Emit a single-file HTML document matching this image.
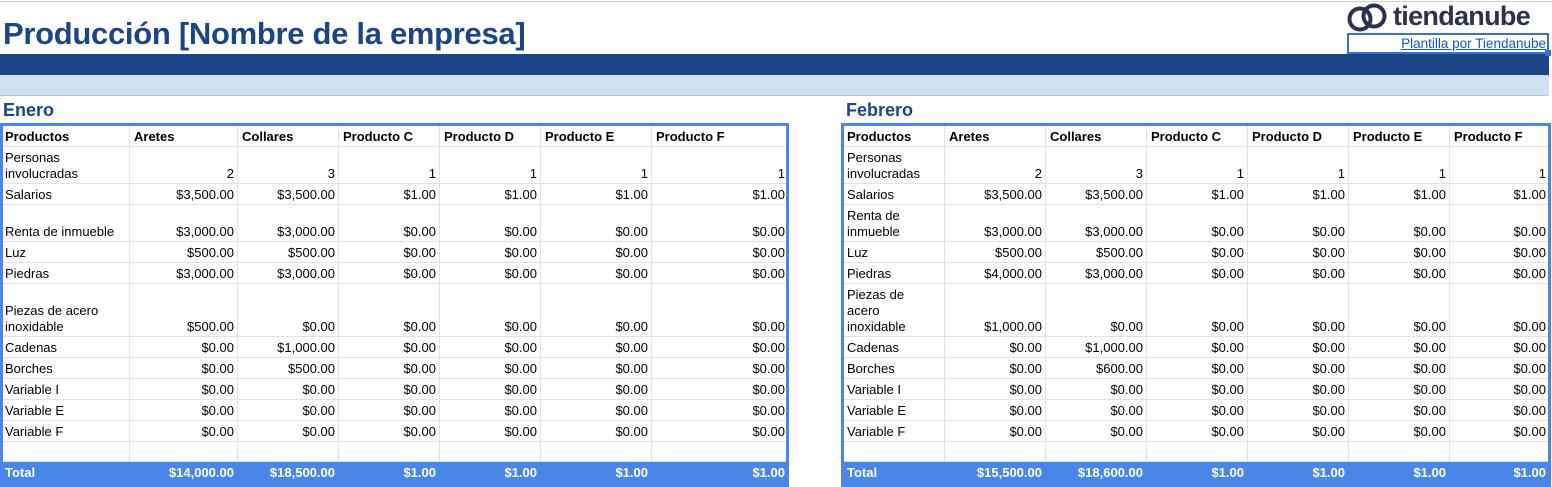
<!DOCTYPE html>
<html><head><meta charset="utf-8"><style>
*{box-sizing:border-box;margin:0;padding:0}
body{width:1552px;height:487px;background:#fff;font-family:"Liberation Sans",Arial,sans-serif;position:relative;overflow:hidden;color:#000}
.abs{position:absolute}
table{border-collapse:collapse;table-layout:fixed;position:absolute;font-size:13px}
td{border:1px solid #e2e2e2;padding:0 3px 1px 4px;vertical-align:bottom;line-height:16px;white-space:nowrap;overflow:hidden}
td.n{text-align:right}
tr.h td{font-weight:bold}
tr.t td{background:#4a86e8;color:#fff;font-weight:bold;border-color:#4a86e8;vertical-align:middle}
.frame{position:absolute;border:3px solid #4a86e8;pointer-events:none}
</style></head><body>
<div class="abs" style="left:0;top:1px;width:1552px;height:1px;background:#d0d0d0"></div>
<div class="abs" style="left:3px;top:16px;font-size:31px;font-weight:bold;color:#1c4587;letter-spacing:-0.3px">Producción [Nombre de la empresa]</div>
<div class="abs" style="left:0;top:54px;width:1549px;height:21px;background:#1c4587"></div>
<div class="abs" style="left:0;top:75px;width:1549px;height:21px;background:#cfe2f3;border-bottom:1px solid #c0c8d0"></div>
<div class="abs" style="left:3px;top:100px;font-size:18px;font-weight:bold;color:#1c4587">Enero</div>
<div class="abs" style="left:846px;top:100px;font-size:18px;font-weight:bold;color:#1c4587">Febrero</div>
<svg class="abs" style="left:1347px;top:2px" width="44" height="32" viewBox="0 0 44 32"><circle cx="13" cy="17" r="10.5" fill="none" stroke="#2d3150" stroke-width="4"/><circle cx="27" cy="14" r="10.5" fill="none" stroke="#2d3150" stroke-width="4"/></svg>
<div class="abs" style="left:1393px;top:1px;font-size:27px;font-weight:bold;color:#2d3150;letter-spacing:-0.7px">tiendanube</div>
<div class="abs" style="left:1347px;top:33px;width:202px;height:21px;border:2px solid #3a6ed8;font-size:13.5px;text-align:right;padding:1px 1px 0 0;white-space:nowrap"><span style="color:#1155cc;text-decoration:underline">Plantilla por Tiendanube</span></div>
<div class="abs" style="left:1545px;top:50px;width:6px;height:6px;background:#3a6ed8"></div>

<table style="left:0;top:124px;width:788px">
<colgroup><col style="width:129px"><col style="width:108px"><col style="width:101px"><col style="width:101px"><col style="width:101px"><col style="width:111px"><col style="width:137px"></colgroup>
<tr class="h" style="height:22px"><td>Productos</td><td>Aretes</td><td>Collares</td><td>Producto C</td><td>Producto D</td><td>Producto E</td><td>Producto F</td></tr>
<tr style="height:37px"><td>Personas<br>involucradas</td><td class="n">2</td><td class="n">3</td><td class="n">1</td><td class="n">1</td><td class="n">1</td><td class="n">1</td></tr>
<tr style="height:21px"><td>Salarios</td><td class="n">$3,500.00</td><td class="n">$3,500.00</td><td class="n">$1.00</td><td class="n">$1.00</td><td class="n">$1.00</td><td class="n">$1.00</td></tr>
<tr style="height:37px"><td>Renta de inmueble</td><td class="n">$3,000.00</td><td class="n">$3,000.00</td><td class="n">$0.00</td><td class="n">$0.00</td><td class="n">$0.00</td><td class="n">$0.00</td></tr>
<tr style="height:21px"><td>Luz</td><td class="n">$500.00</td><td class="n">$500.00</td><td class="n">$0.00</td><td class="n">$0.00</td><td class="n">$0.00</td><td class="n">$0.00</td></tr>
<tr style="height:21px"><td>Piedras</td><td class="n">$3,000.00</td><td class="n">$3,000.00</td><td class="n">$0.00</td><td class="n">$0.00</td><td class="n">$0.00</td><td class="n">$0.00</td></tr>
<tr style="height:53px"><td>Piezas de acero<br>inoxidable</td><td class="n">$500.00</td><td class="n">$0.00</td><td class="n">$0.00</td><td class="n">$0.00</td><td class="n">$0.00</td><td class="n">$0.00</td></tr>
<tr style="height:21px"><td>Cadenas</td><td class="n">$0.00</td><td class="n">$1,000.00</td><td class="n">$0.00</td><td class="n">$0.00</td><td class="n">$0.00</td><td class="n">$0.00</td></tr>
<tr style="height:21px"><td>Borches</td><td class="n">$0.00</td><td class="n">$500.00</td><td class="n">$0.00</td><td class="n">$0.00</td><td class="n">$0.00</td><td class="n">$0.00</td></tr>
<tr style="height:21px"><td>Variable I</td><td class="n">$0.00</td><td class="n">$0.00</td><td class="n">$0.00</td><td class="n">$0.00</td><td class="n">$0.00</td><td class="n">$0.00</td></tr>
<tr style="height:21px"><td>Variable E</td><td class="n">$0.00</td><td class="n">$0.00</td><td class="n">$0.00</td><td class="n">$0.00</td><td class="n">$0.00</td><td class="n">$0.00</td></tr>
<tr style="height:21px"><td>Variable F</td><td class="n">$0.00</td><td class="n">$0.00</td><td class="n">$0.00</td><td class="n">$0.00</td><td class="n">$0.00</td><td class="n">$0.00</td></tr>
<tr style="height:20px"><td></td><td></td><td></td><td></td><td></td><td></td><td></td></tr>
<tr class="t" style="height:24px"><td>Total</td><td class="n">$14,000.00</td><td class="n">$18,500.00</td><td class="n">$1.00</td><td class="n">$1.00</td><td class="n">$1.00</td><td class="n">$1.00</td></tr>
</table>
<div class="frame" style="left:0;top:123px;width:789px;height:364px"></div>

<table style="left:842px;top:124px;width:707px">
<colgroup><col style="width:102px"><col style="width:101px"><col style="width:101px"><col style="width:101px"><col style="width:101px"><col style="width:101px"><col style="width:100px"></colgroup>
<tr class="h" style="height:22px"><td>Productos</td><td>Aretes</td><td>Collares</td><td>Producto C</td><td>Producto D</td><td>Producto E</td><td>Producto F</td></tr>
<tr style="height:37px"><td>Personas<br>involucradas</td><td class="n">2</td><td class="n">3</td><td class="n">1</td><td class="n">1</td><td class="n">1</td><td class="n">1</td></tr>
<tr style="height:21px"><td>Salarios</td><td class="n">$3,500.00</td><td class="n">$3,500.00</td><td class="n">$1.00</td><td class="n">$1.00</td><td class="n">$1.00</td><td class="n">$1.00</td></tr>
<tr style="height:37px"><td>Renta de<br>inmueble</td><td class="n">$3,000.00</td><td class="n">$3,000.00</td><td class="n">$0.00</td><td class="n">$0.00</td><td class="n">$0.00</td><td class="n">$0.00</td></tr>
<tr style="height:21px"><td>Luz</td><td class="n">$500.00</td><td class="n">$500.00</td><td class="n">$0.00</td><td class="n">$0.00</td><td class="n">$0.00</td><td class="n">$0.00</td></tr>
<tr style="height:21px"><td>Piedras</td><td class="n">$4,000.00</td><td class="n">$3,000.00</td><td class="n">$0.00</td><td class="n">$0.00</td><td class="n">$0.00</td><td class="n">$0.00</td></tr>
<tr style="height:53px"><td>Piezas de<br>acero<br>inoxidable</td><td class="n">$1,000.00</td><td class="n">$0.00</td><td class="n">$0.00</td><td class="n">$0.00</td><td class="n">$0.00</td><td class="n">$0.00</td></tr>
<tr style="height:21px"><td>Cadenas</td><td class="n">$0.00</td><td class="n">$1,000.00</td><td class="n">$0.00</td><td class="n">$0.00</td><td class="n">$0.00</td><td class="n">$0.00</td></tr>
<tr style="height:21px"><td>Borches</td><td class="n">$0.00</td><td class="n">$600.00</td><td class="n">$0.00</td><td class="n">$0.00</td><td class="n">$0.00</td><td class="n">$0.00</td></tr>
<tr style="height:21px"><td>Variable I</td><td class="n">$0.00</td><td class="n">$0.00</td><td class="n">$0.00</td><td class="n">$0.00</td><td class="n">$0.00</td><td class="n">$0.00</td></tr>
<tr style="height:21px"><td>Variable E</td><td class="n">$0.00</td><td class="n">$0.00</td><td class="n">$0.00</td><td class="n">$0.00</td><td class="n">$0.00</td><td class="n">$0.00</td></tr>
<tr style="height:21px"><td>Variable F</td><td class="n">$0.00</td><td class="n">$0.00</td><td class="n">$0.00</td><td class="n">$0.00</td><td class="n">$0.00</td><td class="n">$0.00</td></tr>
<tr style="height:20px"><td></td><td></td><td></td><td></td><td></td><td></td><td></td></tr>
<tr class="t" style="height:24px"><td>Total</td><td class="n">$15,500.00</td><td class="n">$18,600.00</td><td class="n">$1.00</td><td class="n">$1.00</td><td class="n">$1.00</td><td class="n">$1.00</td></tr>
</table>
<div class="frame" style="left:841px;top:123px;width:710px;height:364px"></div>
</body></html>
